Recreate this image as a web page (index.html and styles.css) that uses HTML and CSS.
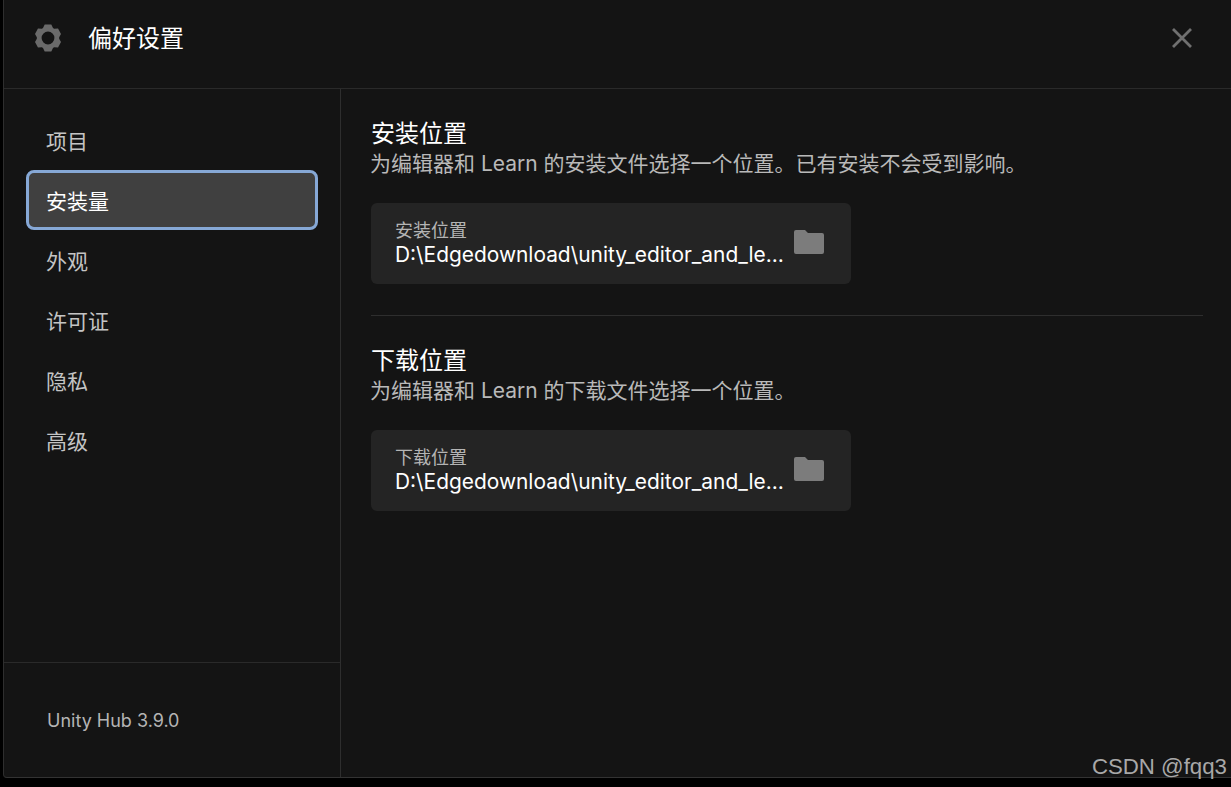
FILE: index.html
```html
<!DOCTYPE html>
<html lang="zh-CN">
<head>
<meta charset="utf-8">
<title>偏好设置</title>
<link rel="stylesheet" href="styles.css">
</head>
<body>
<div class="window">
  <header class="header">
    <svg class="gear" viewBox="0 0 26 28" width="26" height="28"><path fill-rule="evenodd" d="M8 4L9.700 .5H16.300L18 4L19.160 4.670L23.040 4.390L26 10.110L24.160 13.330V14.670L26 17.890L23.040 23.610L19.160 23.330L18 24L16.300 27.500H9.700L8 24L6.840 23.330L2.960 23.610L0 17.890L1.840 14.670V13.330L0 10.110L2.960 4.390L6.840 4.670ZM13 7.600a6.400 6.400 0 1 0 0 12.800a6.400 6.400 0 0 0 0-12.800Z"/></svg>
    <h1 class="title">偏好设置</h1>
    <svg class="close" viewBox="0 0 24 24" width="24" height="24"><path d="M3 3l18 18M21 3L3 21"/></svg>
  </header>
  <div class="body">
    <aside class="sidebar">
      <nav class="nav">
        <a class="nav-item">项目</a>
        <a class="nav-item active">安装量</a>
        <a class="nav-item">外观</a>
        <a class="nav-item">许可证</a>
        <a class="nav-item">隐私</a>
        <a class="nav-item">高级</a>
      </nav>
      <div class="version">Unity Hub 3.9.0</div>
    </aside>
    <main class="content">
      <section class="section">
        <h2 class="section-title">安装位置</h2>
        <p class="section-desc">为编辑器和 Learn 的安装文件选择一个位置。已有安装不会受到影响。</p>
        <div class="field">
          <div class="field-text">
            <div class="field-label">安装位置</div>
            <div class="field-value">D:\Edgedownload\unity_editor_and_le…</div>
          </div>
          <svg class="folder" viewBox="0 0 30 24" width="30" height="24"><path d="M2 0h9l3 3h14a2 2 0 0 1 2 2v17a2 2 0 0 1-2 2H2a2 2 0 0 1-2-2V2a2 2 0 0 1 2-2z"/></svg>
        </div>
      </section>
      <hr class="divider">
      <section class="section">
        <h2 class="section-title">下载位置</h2>
        <p class="section-desc">为编辑器和 Learn 的下载文件选择一个位置。</p>
        <div class="field">
          <div class="field-text">
            <div class="field-label">下载位置</div>
            <div class="field-value">D:\Edgedownload\unity_editor_and_le…</div>
          </div>
          <svg class="folder" viewBox="0 0 30 24" width="30" height="24"><path d="M2 0h9l3 3h14a2 2 0 0 1 2 2v17a2 2 0 0 1-2 2H2a2 2 0 0 1-2-2V2a2 2 0 0 1 2-2z"/></svg>
        </div>
      </section>
    </main>
  </div>
</div>
<div class="watermark">CSDN @fqq3</div>
</body>
</html>
```
FILE: styles.css
```css
* { box-sizing: border-box; }
html, body { height: 100%; }
body {
  margin: 0;
  background: #000;
  padding: 0 0 9px 3px;
  font-family: Inter, "Noto Sans CJK SC", sans-serif;
  overflow: hidden;
}
.window {
  height: 778px;
  background: #141414;
  border-left: 1px solid #2e2e2e;
  border-bottom: 1px solid #333;
  border-bottom-left-radius: 4px;
  display: flex;
  flex-direction: column;
}
.header {
  height: 89px;
  flex: none;
  display: flex;
  align-items: center;
  border-bottom: 1px solid #2a2a2a;
  padding: 0 37px 13px 31px;
}
.gear { fill: #6a6a6a; flex: none; }
.title {
  margin: 0 0 0 27px;
  padding-top: 2px;
  font-size: 24px;
  font-weight: 400;
  color: #fff;
  line-height: 32px;
  flex: 1;
}
.close { fill: none; stroke: #707070; stroke-width: 2.8; flex: none; }
.body { flex: 1; display: flex; min-height: 0; }
.sidebar {
  width: 337px;
  flex: none;
  border-right: 1px solid #2e2e2e;
  display: flex;
  flex-direction: column;
}
.nav {
  flex: 1;
  padding: 21px 22px 0 22px;
  display: flex;
  flex-direction: column;
}
.nav-item {
  height: 60px;
  display: flex;
  align-items: center;
  padding-left: 20px;
  font-size: 21px;
  color: #c4c4c4;
}
.nav-item.active {
  background: #404040;
  color: #fff;
  border: 3px solid #86a8d6;
  border-radius: 8px;
  padding-left: 17px;
}
.version {
  height: 115px;
  flex: none;
  border-top: 1px solid #2a2a2a;
  padding: 47px 0 0 43px;
  font-size: 18px;
  line-height: 22px;
  color: #b4b4b4;
}
.content {
  flex: 1;
  padding: 28px 28px 0 30px;
}
.section-title {
  margin: 0;
  font-size: 24px;
  line-height: 33px;
  font-weight: 400;
  color: #fff;
}
.section-desc {
  margin: 0 0 0 -1px;
  font-size: 21px;
  line-height: 28px;
  color: #b9b9b9;
}
.field {
  margin-top: 25px;
  width: 480px;
  height: 81px;
  background: #242424;
  border-radius: 6px;
  display: flex;
  align-items: center;
  padding: 0 27px 0 24px;
  gap: 9px;
}
.field-text { flex: 1; min-width: 0; }
.field-label { font-size: 18px; line-height: 22px; color: #b4b4b4; margin-top: 1px; }
.field-value {
  font-size: 20.9px;
  line-height: 26px;
  color: #fff;
  white-space: nowrap;
}
.folder { fill: #7c7c7c; flex: none; margin-bottom: 3px; }
.divider {
  margin: 31px 0 28px;
  border: 0;
  border-top: 1px solid #2e2e2e;
}
.watermark {
  position: absolute;
  right: 4px;
  bottom: 7px;
  font-family: "Liberation Sans", sans-serif;
  font-size: 22.25px;
  line-height: 26px;
  color: #a8a8a8;
}
```
